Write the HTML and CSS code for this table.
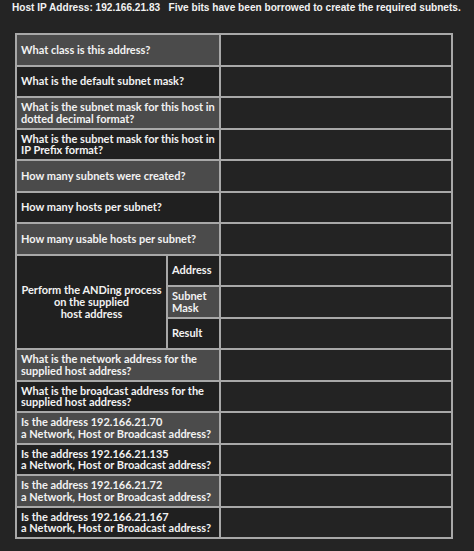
FILE: index.html
```html
<!DOCTYPE html>
<html>
<head>
<meta charset="utf-8">
<link rel="stylesheet" href="styles.css">
</head>
<body>
<div class="title">Host IP Address: 192.166.21.83&nbsp;&nbsp; Five bits have been borrowed to create the required subnets.</div>
<table class="grid">
  <colgroup><col class="c1"><col class="c2"><col class="c3"></colgroup>
  <tr><td colspan="2" class="q light">What class is this address?</td><td class="ans"></td></tr>
  <tr><td colspan="2" class="q dark">What is the default subnet mask?</td><td class="ans"></td></tr>
  <tr><td colspan="2" class="q light">What is the subnet mask for this host in dotted decimal format?</td><td class="ans"></td></tr>
  <tr><td colspan="2" class="q dark">What is the subnet mask for this host in IP Prefix format?</td><td class="ans"></td></tr>
  <tr><td colspan="2" class="q light">How many subnets were created?</td><td class="ans"></td></tr>
  <tr><td colspan="2" class="q dark">How many hosts per subnet?</td><td class="ans"></td></tr>
  <tr><td colspan="2" class="q light">How many usable hosts per subnet?</td><td class="ans"></td></tr>
  <tr><td rowspan="3" class="anding dark">Perform the ANDing process<br>on the supplied<br>host address</td><td class="sub dark">Address</td><td class="ans"></td></tr>
  <tr><td class="sub light">Subnet Mask</td><td class="ans"></td></tr>
  <tr><td class="sub dark">Result</td><td class="ans"></td></tr>
  <tr><td colspan="2" class="q light">What is the network address for the supplied host address?</td><td class="ans"></td></tr>
  <tr><td colspan="2" class="q dark">What is the broadcast address for the supplied host address?</td><td class="ans"></td></tr>
  <tr><td colspan="2" class="q light">Is the address 192.166.21.70<br>a Network, Host or Broadcast address?</td><td class="ans"></td></tr>
  <tr><td colspan="2" class="q dark">Is the address 192.166.21.135<br>a Network, Host or Broadcast address?</td><td class="ans"></td></tr>
  <tr><td colspan="2" class="q light">Is the address 192.166.21.72<br>a Network, Host or Broadcast address?</td><td class="ans"></td></tr>
  <tr><td colspan="2" class="q dark">Is the address 192.166.21.167<br>a Network, Host or Broadcast address?</td><td class="ans"></td></tr>
</table>
</body>
</html>
```
FILE: styles.css
```css
html, body {
  margin: 0;
  padding: 0;
  background: #242424;
}
body {
  width: 474px;
  height: 551px;
  overflow: hidden;
  color: #f2f2f2;
  font-family: "Liberation Sans", Arial, sans-serif;
}
.title {
  font-weight: bold;
  font-size: 10.1px;
  padding: 2px 0 0 12px;
  height: 21px;
  line-height: 12px;
  white-space: nowrap;
}
.grid {
  margin: 10px 0 0 15px;
  border-collapse: collapse;
  table-layout: fixed;
  width: 438px;
  font-family: Lato, "Liberation Sans", sans-serif;
  font-weight: bold;
  font-size: 11px;
  line-height: 11.6px;
}
.c1 { width: 151px; }
.c2 { width: 53px; }
.c3 { width: 232px; }
.grid tr {
  height: 31.5px;
}
.grid td {
  border: 2px solid #a8a8a8;
  padding: 0 4px;
  vertical-align: middle;
}
.light { background: #4b4b4b; }
.dark { background: #202020; }
.ans { background: #232323; }
.anding { text-align: center; }
```
